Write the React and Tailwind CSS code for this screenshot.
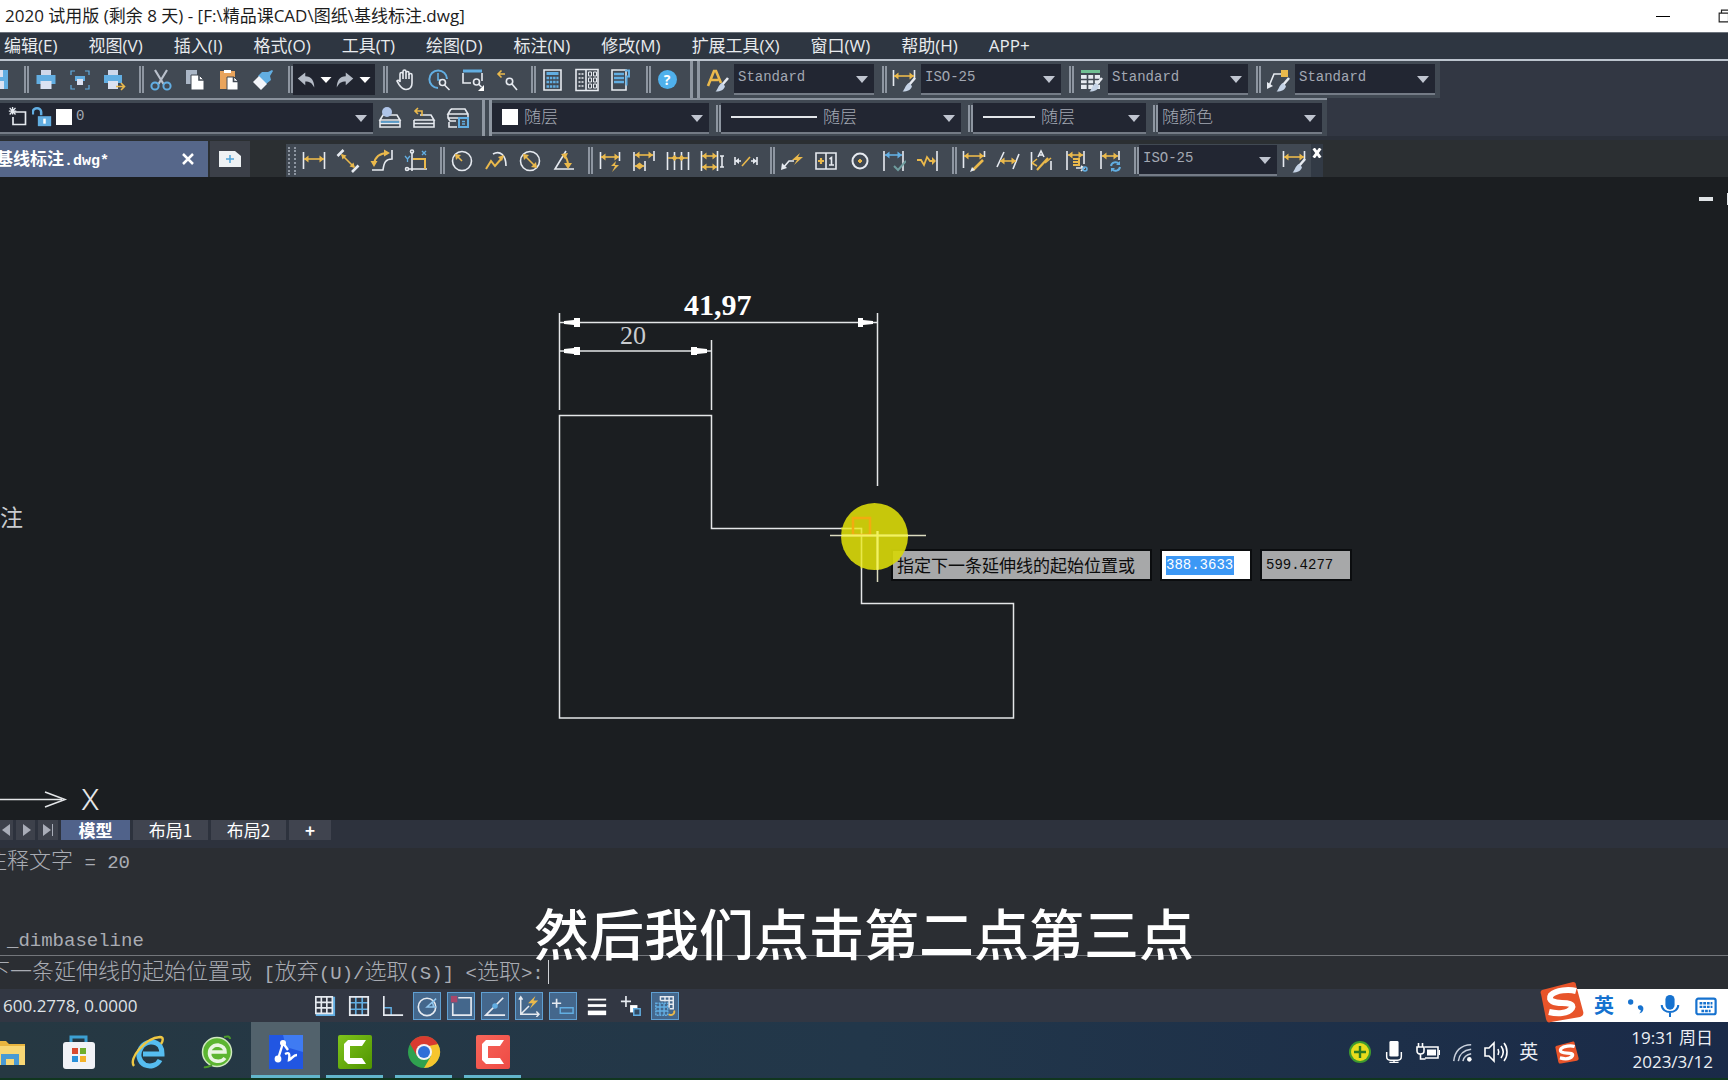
import { useState } from "react";
import clsx from "clsx";

const Y = "#eab94c";
const W = "#e6eaf0";
const B = "#62aee2";
const G = "#b4bbc6";

const menus = ["编辑(E)", "视图(V)", "插入(I)", "格式(O)", "工具(T)", "绘图(D)", "标注(N)", "修改(M)", "扩展工具(X)", "窗口(W)", "帮助(H)", "APP+"];

function Icon({ children, className = "size-6" }) {
  return (
    <svg viewBox="0 0 24 24" className={clsx("shrink-0", className)} fill="none" strokeWidth="1.6">
      {children}
    </svg>
  );
}

/* Horizontal dimension: two ticks and a double arrow */
function DimArrow({ x1 = 2, x2 = 22, y = 10, color = Y }) {
  return (
    <g>
      <path d={`M${x1} ${y}H${x2}`} stroke={color} />
      <path d={`M${x1} ${y}l4.5-3.5v7zM${x2} ${y}l-4.5-3.5v7z`} fill={color} />
    </g>
  );
}

const Brush = () => (
  <g>
    <path d="M23 10l-6 7" stroke={W} strokeWidth="2.6" />
    <path d="M17 15l3 3c-1 4-4 5.500-9.500 5.500 2.500-2 2.500-6.500 6.500-8.500z" fill="#c5d3e6" />
  </g>
);

const fileIcons = [
  {
    name: "打印",
    icon: (
      <Icon>
        <path d="M7 2h10v6H7z" fill="#cfd8ea" />
        <path d="M2.500 7h19v9h-19z" fill={B} />
        <path d="M6.500 13h11v8h-11z" fill="#dbe2f2" />
      </Icon>
    ),
  },
  {
    name: "打印预览",
    icon: (
      <Icon>
        <path d="M3 7V3h4M17 3h4v4M21 17v4h-4M7 21H3v-4" stroke={B} strokeWidth="1.200" />
        <path d="M7 8h10v5H7z" fill={B} />
        <path d="M9 11h6v6H9z" fill="#dbe2f2" />
      </Icon>
    ),
  },
  {
    name: "发布",
    icon: (
      <Icon>
        <path d="M6 2h10v6H6z" fill="#cfd8ea" />
        <path d="M2 7h18v8H2z" fill={B} />
        <path d="M6 13h10v8H6z" fill="#dbe2f2" />
        <path d="M14 18.500h8M19 15l3.500 3.500L19 22" stroke={Y} />
      </Icon>
    ),
  },
];

const editIcons = [
  {
    name: "剪切",
    icon: (
      <Icon>
        <path d="M6 2l8.500 14M18 2L9.500 16" stroke="#b9c0cb" strokeWidth="2.200" />
        <circle cx="6" cy="18" r="3.600" stroke={B} strokeWidth="2" />
        <circle cx="18" cy="18" r="3.600" stroke={B} strokeWidth="2" />
      </Icon>
    ),
  },
  {
    name: "复制",
    icon: (
      <Icon>
        <path d="M3 2h11v14H3z" fill="#aab6c6" />
        <path d="M8 7h8l5 5v10H8z" fill="#fff" stroke="#414953" strokeWidth="1" />
        <path d="M16 7v5h5" stroke="#414953" />
      </Icon>
    ),
  },
  {
    name: "粘贴",
    icon: (
      <Icon>
        <path d="M3 3h15v18H3z" fill="#e9a45c" />
        <path d="M7 2h7v3H7z" fill="#fff" />
        <path d="M10 9h7l4 4v9H10z" fill="#fff" stroke="#414953" strokeWidth="1" />
        <path d="M16.500 9v4.500H21" stroke="#414953" />
      </Icon>
    ),
  },
  {
    name: "特性匹配",
    icon: (
      <Icon>
        <path d="M17 4l4-2 1 1-3 5 1 4-5 4-8-8 4-4z" fill={B} />
        <path d="M8 8l8 8-6 6-8-8z" fill="#f3f5fa" />
      </Icon>
    ),
  },
];

const zoomIcons = [
  {
    name: "平移",
    icon: (
      <Icon>
        <path
          d="M7 14V6a1.500 1.500 0 013 0V3.500a1.500 1.500 0 013 0V5a1.500 1.500 0 013 0v2a1.500 1.500 0 013 0v8c0 4-2 6.500-6 6.500-3.500 0-5-2-7-5l-2-3.500c1-1.500 2.500-.5 3 1z"
          stroke={W}
        />
        <path d="M10 6v5M13 5v6M16 6v5" stroke={W} />
      </Icon>
    ),
  },
  {
    name: "实时缩放",
    icon: (
      <Icon>
        <path d="M11 20A8.800 8.800 0 1120 11" stroke={B} strokeWidth="2" />
        <path d="M11 5v7h3" stroke={B} />
        <circle cx="15.500" cy="14.500" r="3" stroke={W} />
        <path d="M17.500 17l5 5" stroke={W} />
      </Icon>
    ),
  },
  {
    name: "窗口缩放",
    icon: (
      <Icon>
        <path d="M2 3h19" stroke={B} strokeWidth="3" />
        <path d="M2 5v10h8M21 5v8" stroke={W} />
        <circle cx="15.500" cy="14" r="3" stroke={W} />
        <path d="M17.500 16l3 3" stroke={W} />
        <path d="M23 17v6h-6z" fill="#fff" />
      </Icon>
    ),
  },
  {
    name: "缩放上一个",
    icon: (
      <Icon>
        <path d="M3 6h7M6.500 2.500L3 6l3.500 3.500" stroke={Y} />
        <circle cx="14.500" cy="13.500" r="3.200" stroke={W} />
        <path d="M17 16l5 6" stroke={W} />
      </Icon>
    ),
  },
];

const paletteIcons = [
  {
    name: "特性",
    icon: (
      <Icon>
        <path d="M3 2h17v20H3z" stroke={W} />
        <path d="M5.500 5.500h12" stroke={B} strokeWidth="3" />
        <path d="M5.500 10h12M5.500 14h12M5.500 18.500h12" stroke={B} strokeWidth="2.400" strokeDasharray="2.500 .8" />
      </Icon>
    ),
  },
  {
    name: "设计中心",
    icon: (
      <Icon>
        <path d="M1 1.500h22v21H1zM11 1.500v21" stroke={W} />
        <path d="M3.500 6h5M3.500 10h5M3.500 14h5M3.500 18h5" stroke={W} strokeDasharray="2 1" />
        <path d="M13.500 4h3v4h-3zM18.500 4h3v4h-3zM13.500 10h3v4h-3zM18.500 10h3v4h-3zM13.500 16h3v4h-3zM18.500 16h3v4h-3z" stroke={W} strokeWidth="1" />
      </Icon>
    ),
  },
  {
    name: "工具选项板",
    icon: (
      <Icon>
        <path d="M3 2h14v20H3z" stroke={W} />
        <path d="M5 6h10M5 10h10M5 14h10" stroke={B} strokeWidth="2.600" />
        <path d="M16 2.500h4v6h-2.500v9" stroke={B} strokeWidth="2" />
      </Icon>
    ),
  },
];

const styleTools = [
  {
    name: "文字样式",
    value: "Standard",
    icon: (
      <Icon>
        <path d="M3 18L9 3h2l5 12M5.500 12h8" stroke={Y} strokeWidth="2.600" />
        <Brush />
      </Icon>
    ),
  },
  {
    name: "标注样式",
    value: "ISO-25",
    icon: (
      <Icon>
        <path d="M1.500 2v16M22.500 2v9" stroke={W} />
        <DimArrow y={8} />
        <Brush />
      </Icon>
    ),
  },
  {
    name: "表格样式",
    value: "Standard",
    icon: (
      <Icon>
        <path d="M2 3.500h19" stroke="#6fbf92" strokeWidth="3" />
        <path d="M2 7h19v14H2z" fill={W} />
        <path d="M2 11.500h19M2 16h19M8.500 7v14M15 7v14" stroke="#414953" />
        <Brush />
      </Icon>
    ),
  },
  {
    name: "引线样式",
    value: "Standard",
    icon: (
      <Icon>
        <path d="M3 18L8 6h8" stroke={W} />
        <path d="M1 14v7l6-3z" fill={W} />
        <path d="M15 2h7v7h-7z" fill={Y} />
        <Brush />
      </Icon>
    ),
  },
];

const layerIcons = [
  {
    name: "设为当前图层",
    icon: (
      <Icon>
        <path d="M5 9h14l3 5H2zM2 14v7h20v-7M2 17.500h20" stroke={W} />
        <path d="M3 16h18" stroke={B} />
        <circle cx="9" cy="6" r="5" fill="#aec4e8" />
      </Icon>
    ),
  },
  {
    name: "上一个图层",
    icon: (
      <Icon>
        <path d="M8 9h11l3 5H2M2 14v7h20v-7M2 17.500h20" stroke={W} />
        <path d="M10 10V5H3M6 2L3 5l3 3" stroke={Y} />
      </Icon>
    ),
  },
  {
    name: "图层状态",
    icon: (
      <Icon>
        <path d="M5 3h14l3 5v3M5 3L2 8h20M2 12h10M2 8v4l2 3h6M3 16v5h8" stroke={W} />
        <path d="M13 12h9v9h-9z" stroke={B} strokeWidth="2" />
        <path d="M16 15.500h3M16 18h3" stroke={B} />
      </Icon>
    ),
  },
];

const dimGroups = [
  [
    {
      name: "线性标注",
      icon: (
        <Icon>
          <path d="M1.500 3v17M22.500 3v17" stroke={W} />
          <DimArrow />
        </Icon>
      ),
    },
    {
      name: "对齐标注",
      icon: (
        <Icon>
          <path d="M1.500 7L7.500 1M16 23l6.500-6.500" stroke={W} strokeWidth="2.600" />
          <path d="M6 6l12 12" stroke={Y} />
          <path d="M5 5l5.500 1.500-4 4zM19 19l-5.500-1.500 4-4z" fill={Y} />
        </Icon>
      ),
    },
    {
      name: "弧长标注",
      icon: (
        <Icon>
          <path d="M22 1v9c-6 0-8 3-9 11H2" stroke={W} />
          <path d="M4 15C5 8 10 4 18 4" stroke={Y} strokeWidth="2" />
          <path d="M20 4l-6-3.500v7zM4 18l-3.500-6h7z" fill={Y} />
        </Icon>
      ),
    },
    {
      name: "坐标标注",
      icon: (
        <Icon>
          <path d="M8 4v18M5 20h18" stroke={W} />
          <circle cx="8" cy="2.500" r="1.500" stroke={W} />
          <circle cx="3" cy="20" r="1.500" stroke={W} />
          <path d="M9 10h12v10" stroke={Y} strokeWidth="2" />
          <path d="M18 2l4 4M22 2l-4 4M1 7l2.500 3L6 7M3.500 10v3" stroke={B} strokeWidth="1.300" />
        </Icon>
      ),
    },
  ],
  [
    {
      name: "半径标注",
      icon: (
        <Icon>
          <circle cx="12" cy="12" r="9.500" stroke={W} />
          <path d="M6 6l6 6" stroke={Y} />
          <path d="M5 5l6 1-5 5z" fill={Y} />
        </Icon>
      ),
    },
    {
      name: "折弯标注",
      icon: (
        <Icon>
          <path d="M9 5c7-4 13 1 13 12" stroke={W} />
          <path d="M2 20l5-8 4 5 7-8" stroke={Y} strokeWidth="2" />
          <path d="M20 6l-6 2 4 4z" fill={Y} />
        </Icon>
      ),
    },
    {
      name: "直径标注",
      icon: (
        <Icon>
          <circle cx="12" cy="12" r="9.500" stroke={W} />
          <path d="M6 6l12 12" stroke={Y} />
          <path d="M5 5l6 1-5 5zM19 19l-6-1 5-5z" fill={Y} />
        </Icon>
      ),
    },
    {
      name: "角度标注",
      icon: (
        <Icon>
          <path d="M14 2L3 20h19" stroke={W} />
          <path d="M11 6c4 2 5 6 5 11" stroke={Y} strokeWidth="2" />
          <path d="M9 5l7-1-3 6zM16 20l-4-6h8z" fill={Y} />
        </Icon>
      ),
    },
  ],
  [
    {
      name: "快速标注",
      icon: (
        <Icon>
          <path d="M2.500 3v17M21.500 3v9" stroke={W} />
          <DimArrow x1={3} x2={21} y={8} />
          <path d="M18 12l-5 5h4l-3 6 7-7h-4z" fill={Y} />
        </Icon>
      ),
    },
    {
      name: "基线标注",
      icon: (
        <Icon>
          <path d="M2 3v19M22 2v10M13 12v10" stroke={W} />
          <DimArrow x1={3} x2={21} y={6} />
          <DimArrow x1={3} x2={12} y={17} />
        </Icon>
      ),
    },
    {
      name: "连续标注",
      icon: (
        <Icon>
          <path d="M1.500 3v18M8.500 3v18M15.500 3v18M22.500 3v18" stroke={W} />
          <path d="M2 9h20" stroke={Y} />
          <path d="M8.500 6v6l-3-3zM8.500 6v6l3-3zM15.500 6v6l-3-3zM15.500 6v6l3-3z" fill={Y} />
        </Icon>
      ),
    },
    {
      name: "标注间距",
      icon: (
        <Icon>
          <path d="M1.500 2v20M17.500 2v20M20 7h4M20 18h4M22 7v11" stroke={W} />
          <DimArrow x1={2} x2={17} y={7} />
          <DimArrow x1={2} x2={17} y={18} />
        </Icon>
      ),
    },
    {
      name: "打断标注",
      icon: (
        <Icon>
          <path d="M1 8v8M23 8v8M1 12h6M17 12h6" stroke={W} />
          <path d="M1 12l4-3v6zM23 12l-4-3v6z" fill={W} />
          <path d="M8 17l8-9" stroke={Y} />
        </Icon>
      ),
    },
  ],
  [
    {
      name: "快速引线",
      icon: (
        <Icon>
          <path d="M3 19l6-7h5" stroke={W} />
          <path d="M1 21l1-7 5 5z" fill={W} />
          <path d="M20 4l-8 7h5l-3 5 9-8h-5z" fill={Y} />
        </Icon>
      ),
    },
    {
      name: "公差",
      icon: (
        <Icon>
          <path d="M2 4h20v16H2zM12 4v16" stroke={W} />
          <path d="M4 12h6M7 9v6" stroke={Y} strokeWidth="2.200" />
          <path d="M15.500 10l2-1.500V16M15 16h5" stroke={W} />
        </Icon>
      ),
    },
    {
      name: "圆心标记",
      icon: (
        <Icon>
          <circle cx="12" cy="12" r="7.500" stroke={W} strokeWidth="2" />
          <path d="M10 12h4M12 10v4" stroke={Y} strokeWidth="2" />
        </Icon>
      ),
    },
    {
      name: "检验",
      icon: (
        <Icon>
          <path d="M2 2v20M21 2v20" stroke={W} />
          <DimArrow x1={3} x2={20} y={6} color={B} />
          <path d="M12 17l4 4 8-9" stroke="#6f9c9e" strokeWidth="2" />
        </Icon>
      ),
    },
    {
      name: "折弯线性",
      icon: (
        <Icon>
          <path d="M21 2v20" stroke={W} />
          <path d="M1 11h4l3 5 3-8 3 4h5" stroke={Y} strokeWidth="1.800" />
          <path d="M20 12l-4-4v8z" fill={Y} />
        </Icon>
      ),
    },
  ],
  [
    {
      name: "编辑标注",
      icon: (
        <Icon>
          <path d="M1.500 2v17M22.500 2v6" stroke={W} />
          <DimArrow y={7} />
          <path d="M21 11L11 21" stroke={Y} strokeWidth="2.600" />
          <path d="M8 23l2-5 3 3z" fill={W} />
        </Icon>
      ),
    },
    {
      name: "倾斜标注",
      icon: (
        <Icon>
          <path d="M8 3L1 18M23 5l-6 15" stroke={W} />
          <DimArrow x1={4} x2={20} y={12} />
        </Icon>
      ),
    },
    {
      name: "文字角度",
      icon: (
        <Icon>
          <path d="M1.500 3v18M8 8l3-6 3 6M9 6h4M21 12v9" stroke={W} />
          <path d="M2 14l5-4M2 14l5 3M15 14l6-5" stroke={Y} />
          <path d="M18 9L7 21" stroke={Y} strokeWidth="2.200" />
        </Icon>
      ),
    },
    {
      name: "标注替代",
      icon: (
        <Icon>
          <path d="M3 2v19M20 2v13" stroke={W} />
          <DimArrow x1={4} x2={19} y={6} />
          <path d="M9 10h6v6H9M9 13h6" stroke={Y} strokeWidth="2" />
          <path d="M12 19h8M17 17l3 2-3 3" stroke={W} />
          <circle cx="21" cy="20" r="2" stroke={B} />
        </Icon>
      ),
    },
    {
      name: "标注更新",
      icon: (
        <Icon>
          <path d="M3 2v18M21 2v9" stroke={W} />
          <DimArrow x1={4} x2={20} y={7} />
          <path d="M13 17a4.500 4.500 0 018-2M22 18a4.500 4.500 0 01-8 2" stroke={B} strokeWidth="2" />
          <path d="M22 12v4h-4zM13 23v-4h4z" fill={B} />
        </Icon>
      ),
    },
  ],
];

const statusToggles = [
  {
    name: "捕捉",
    icon: (
      <Icon className="size-[22px]">
        <path d="M21.500 2v19.500H2" stroke={B} strokeWidth="3" />
        <path d="M2 2h18v18H2zM8 2v18M14 2v18M2 8h18M2 14h18" stroke={W} strokeWidth="1.800" />
      </Icon>
    ),
  },
  {
    name: "栅格",
    icon: (
      <Icon className="size-[22px]">
        <path d="M8.500 2v20M15.500 2v20M2 8.500h20M2 15.500h20" stroke={B} strokeWidth="1.800" />
        <path d="M2 2h20v20H2z" stroke={W} strokeWidth="2" />
      </Icon>
    ),
  },
  {
    name: "正交",
    icon: (
      <Icon className="size-[22px]">
        <path d="M2 14h8v8" stroke={B} />
        <path d="M2 1v21h21" stroke={W} strokeWidth="1.800" />
      </Icon>
    ),
  },
  {
    name: "极轴",
    on: true,
    icon: (
      <Icon className="size-[22px]">
        <circle cx="12" cy="13" r="9.500" stroke={W} strokeWidth="1.800" />
        <path d="M22 4L12 13h10M17 8c2 1 2 3 2 5" stroke="#8fc6ee" />
      </Icon>
    ),
  },
  {
    name: "对象捕捉",
    on: true,
    icon: (
      <Icon className="size-[22px]">
        <path d="M9 3h14v19H3V9" stroke={W} strokeWidth="1.800" />
        <path d="M1 1h7v7H1z" fill="#a8476a" />
      </Icon>
    ),
  },
  {
    name: "对象追踪",
    on: true,
    icon: (
      <Icon className="size-[22px]">
        <path d="M21 3L2 22h21" stroke={W} strokeWidth="1.800" />
        <circle cx="12" cy="12" r="3" fill={B} />
      </Icon>
    ),
  },
  {
    name: "动态UCS",
    on: true,
    icon: (
      <Icon className="size-[22px]">
        <path d="M3 2v19h20M3 21l9-9M1 5l2-3 2 3M20 18l3 3-3 3" stroke={W} />
        <path d="M19 1l-8 8h5l-3 6 9-9h-5z" fill={Y} />
      </Icon>
    ),
  },
  {
    name: "动态输入",
    on: true,
    icon: (
      <Icon className="size-[22px]">
        <path d="M0 9h10M5 4v10" stroke={W} strokeWidth="1.800" />
        <path d="M9 14h14v6H9z" stroke={B} />
      </Icon>
    ),
  },
  {
    name: "线宽",
    icon: (
      <Icon className="size-[22px]">
        <path d="M2 5h20" stroke="#fff" strokeWidth="2" />
        <path d="M2 11.500h20" stroke="#fff" strokeWidth="3" />
        <path d="M2 19.500h20" stroke="#fff" strokeWidth="5" />
      </Icon>
    ),
  },
  {
    name: "选择循环",
    icon: (
      <Icon className="size-[22px]">
        <path d="M1 7h11M6.500 1v12" stroke={W} strokeWidth="1.800" />
        <path d="M11 11h8v8h-8z" fill="#fff" />
        <path d="M15 15h7v7h-7z" fill="#324a62" stroke={B} />
      </Icon>
    ),
  },
  {
    name: "模型空间",
    on: true,
    icon: (
      <Icon className="size-[22px]">
        <path d="M2 9h13v13H2z" stroke={B} strokeDasharray="2 1" />
        <path d="M6.500 9v13M11 9v13M2 13h13M2 17.500h13" stroke={B} />
        <path d="M7 6V2h14v13h-4M12 2v5M16.500 2v12M7 6h14M17 10h4" stroke={W} />
        <path d="M22 17c1 4-3 6-6 4" stroke={Y} strokeWidth="2" />
      </Icon>
    ),
  },
];

function Camtasia({ from, to, id }) {
  return (
    <svg viewBox="0 0 34 34" className="size-[34px]">
      <defs>
        <linearGradient id={id} x1="0" y1="0" x2="1" y2="1">
          <stop offset="0" stopColor={from} />
          <stop offset="1" stopColor={to} />
        </linearGradient>
      </defs>
      <rect width="34" height="34" rx="2" fill={`url(#${id})`} />
      <path d="M28 5H10L6 9v16l4 4h18l-4-6H12V11h12z" fill="#fff" />
    </svg>
  );
}

const apps = [
  {
    name: "文件资源管理器",
    icon: (
      <svg viewBox="0 0 34 34" className="size-[34px]">
        <path d="M0 6h13l3 3h16v21H0z" fill="#e9b53f" />
        <path d="M0 11h32v19H0z" fill="#f8d775" />
        <path d="M8 30V19h18v11h-5v-6h-8v6z" fill="#4a9ad4" />
      </svg>
    ),
  },
  {
    name: "Microsoft Store",
    icon: (
      <svg viewBox="0 0 34 34" className="size-[34px]">
        <path d="M9 9V2h15v7" fill="none" stroke="#3c9fd2" strokeWidth="3" />
        <rect x="1" y="7" width="32" height="27" rx="3" fill="#f1f2f6" />
        <path d="M10 13h6v6h-6z" fill="#d9492f" />
        <path d="M18 13h6v6h-6z" fill="#6fae2c" />
        <path d="M10 21h6v6h-6z" fill="#2b90d9" />
        <path d="M18 21h6v6h-6z" fill="#f3b22a" />
      </svg>
    ),
  },
  {
    name: "Internet Explorer",
    icon: (
      <svg viewBox="0 0 34 34" className="size-[34px]" fill="none">
        <path d="M29 25c-3 6-10 7-15 5-6-3-8-11-4-17 4-7 14-8 19-2 2 3 2 5 2 8H12" stroke="#56bdf0" strokeWidth="5" />
        <path d="M3 31C-3 24 14 3 29 2c4 0 3 4 1 7" stroke="#efc743" strokeWidth="2.400" />
      </svg>
    ),
  },
  {
    name: "360浏览器",
    icon: (
      <svg viewBox="0 0 34 34" className="size-[34px]" fill="none">
        <circle cx="17" cy="17" r="14.500" fill="#5cb531" stroke="#cfe8c0" strokeWidth="1.500" />
        <path d="M25 23c-4 5-13 4-15-2-2-7 3-11 8-11 5 1 7 4 7 7H11" stroke="#e9f5e2" strokeWidth="3.600" />
        <path d="M4 32c2 1 6-1 8-2M24 2c3-1 6-1 6 2" stroke="#4a9a2a" strokeWidth="2" />
      </svg>
    ),
  },
  {
    name: "中望CAD",
    state: "active",
    icon: (
      <svg viewBox="0 0 34 34" className="size-[34px]" fill="none">
        <path d="M0 0h34v34H0z" fill="#2156e2" />
        <path d="M14 0h20v17L17 12z" fill="#3f7bf2" />
        <path d="M14 8L9 24M14 8l5 7" stroke="#fff" strokeWidth="2.400" />
        <circle cx="14" cy="8" r="3" fill="#fff" />
        <circle cx="9" cy="24" r="3.400" fill="#fff" />
        <path d="M16 19c4-2 5-1 4 6 3-1 4-5 8-5" stroke="#fff" strokeWidth="2.400" />
      </svg>
    ),
  },
  { name: "Camtasia", state: "open", icon: <Camtasia id="cam-green" from="#7fc41c" to="#4f9400" /> },
  {
    name: "Chrome",
    state: "open",
    icon: (
      <svg viewBox="0 0 34 34" className="size-[34px]">
        <circle cx="17" cy="17" r="16" fill="#2fa14f" />
        <path d="M3.100 9A16 16 0 0130.900 9L17 10l-7 11z" fill="#d93b30" />
        <path d="M30.900 9A16 16 0 0117 33l7-12-3-11z" fill="#f6c52e" />
        <path d="M17 9h14L17 12z" fill="#d93b30" />
        <circle cx="17" cy="17" r="8" fill="#f2f4f6" />
        <circle cx="17" cy="17" r="6" fill="#2f6fd8" />
      </svg>
    ),
  },
  { name: "Camtasia 录像机", state: "open", icon: <Camtasia id="cam-red" from="#f7665a" to="#ee4a44" /> },
];

function Sogou({ className }) {
  return (
    <svg viewBox="0 0 44 42" className={clsx("shrink-0", className)} fill="none">
      <path d="M2 9L33 1c2 0 3 1 3 3l7 26c1 3 0 5-3 6L11 41c-3 1-4 0-5-3L1 13c-1-2 0-3 1-4z" fill="#e8542a" />
      <path d="M36 10c-7-2-20-1-25 4-4 6 4 8 11 8 6 0 12 1 10 5-4 6-15 6-23 4" stroke="#fff" strokeWidth="6" />
    </svg>
  );
}

function ToolButton({ name, children }) {
  return (
    <button type="button" aria-label={name} className="flex h-8 w-[34px] shrink-0 items-center justify-center">
      {children}
    </button>
  );
}

function Tools({ items }) {
  return items.map((item) => (
    <ToolButton key={item.name} name={item.name}>
      {item.icon}
    </ToolButton>
  ));
}

function Sep({ wide, tight }) {
  return (
    <span
      className={clsx("flex shrink-0 justify-end", wide && "w-[17px] gap-1 self-stretch", tight && "h-[27px] w-3 gap-px", !wide && !tight && "h-[27px] w-[13px] gap-px")}
    >
      <span className={clsx("bg-[#8e96a1]", wide ? "w-[3px]" : "w-0.5")} />
      <span className={clsx("bg-[#8e96a1]", wide ? "w-[3px]" : "w-0.5")} />
    </span>
  );
}

function Combo({ name, value, className, cjk, children }) {
  return (
    <div className={clsx("relative flex h-[31px] shrink-0 items-center border-b-2 border-[#747b86] bg-[#222632] pl-1", className)}>
      {children}
      <select
        aria-label={name}
        defaultValue={value}
        className={clsx(
          "h-full min-w-0 flex-1 appearance-none bg-transparent pb-0.5 pr-6 text-[#a3a8b3] outline-none",
          cjk ? "font-['Noto_Sans_CJK_SC',sans-serif] text-[17px] font-light" : "font-['Liberation_Mono',monospace] text-[14px]"
        )}
      >
        <option>{value}</option>
      </select>
      <svg viewBox="0 0 12 7" className="pointer-events-none absolute right-1.5 top-3 h-[7px] w-3">
        <path d="M0 0h12L6 7z" fill="#c0c5d0" />
      </svg>
    </div>
  );
}

function MenuBar() {
  return (
    <nav className="flex h-[29px] shrink-0 gap-[31px] border-b-2 border-[#bcc4ce] border-t border-t-[#6c737c] bg-[#2e3641] pl-1 text-[17px] leading-[26px] text-[#e8ebee]">
      {menus.map((m) => (
        <button key={m} type="button" className="shrink-0 whitespace-nowrap">
          {m}
        </button>
      ))}
    </nav>
  );
}

function Toolbars() {
  return (
    <div className="flex shrink-0 flex-col items-start bg-[#323743]">
      <div className="flex h-[37px] items-center bg-[#414953] pr-[5px]">
        <button type="button" aria-label="保存" className="-ml-[18px] flex h-8 w-[34px] items-center justify-center">
          <Icon>
            <path d="M2 2h19v19H2z" fill={B} />
            <path d="M6 2h10v7H6zM5 13h12v8H5z" fill="#dbe2f2" />
          </Icon>
        </button>
        <Sep />
        <Tools items={fileIcons} />
        <Sep />
        <Tools items={editIcons} />
        <Sep />
        <div className="flex h-[31px] w-[82px] items-center justify-between bg-[#20242f] px-1">
          <button type="button" aria-label="放弃">
            <Icon className="size-[18px]">
              <path d="M1 10l10-8v5c8 0 12 6 12 15-3-6-6-8-12-8v5z" fill={G} />
            </Icon>
          </button>
          <button type="button" aria-label="放弃列表">
            <Icon className="size-3">
              <path d="M1 6h22L12 18z" fill="#fff" />
            </Icon>
          </button>
          <button type="button" aria-label="重做">
            <Icon className="size-[18px]">
              <path d="M23 10L13 2v5C5 7 1 13 1 22c3-6 6-8 12-8v5z" fill={G} />
            </Icon>
          </button>
          <button type="button" aria-label="重做列表">
            <Icon className="size-3">
              <path d="M1 6h22L12 18z" fill="#fff" />
            </Icon>
          </button>
        </div>
        <Sep />
        <Tools items={zoomIcons} />
        <Sep tight />
        <Tools items={paletteIcons} />
        <Sep />
        <button type="button" aria-label="帮助" className="flex w-8 justify-center">
          <span className="flex size-[19px] items-center justify-center rounded-full bg-[#4fb0ec] text-[14px] font-bold leading-none text-white">?</span>
        </button>
        <Sep wide />
        {styleTools.map((s, i) => (
          <div key={s.name} className="flex items-center">
            {i > 0 && <Sep />}
            <ToolButton name={s.name}>{s.icon}</ToolButton>
            <Combo name={s.name} value={s.value} className="w-[140px]" />
          </div>
        ))}
      </div>

      <div className="flex h-[38px] items-center border-t-2 border-[#8a929d] bg-[#414953] pr-[5px]">
        <Combo name="图层" value="0" className="w-[373px]">
          <Icon className="ml-1 mr-1 size-5">
            <path d="M6 6h15v15H6v-9" stroke={W} strokeWidth="2" />
            <path d="M1 5h9M5.500 0v9M2 1l7 8M9 1L2 9" stroke={W} />
          </Icon>
          <Icon className="mr-1 size-5">
            <path d="M1 9V6c0-6 10-6 10 0v4" stroke={B} strokeWidth="3" />
            <path d="M7 11h16v12H7z" fill={B} />
            <path d="M15 14v6" stroke="#fff" strokeWidth="3" />
          </Icon>
          <span className="mr-1 size-4 shrink-0 bg-white" />
        </Combo>
        <Tools items={layerIcons} />
        <Sep wide />
        <Combo name="颜色" value="随层" cjk className="w-[217px]">
          <span className="ml-1.5 mr-1.5 size-4 shrink-0 bg-white" />
        </Combo>
        <Sep tight />
        <Combo name="线型" value="随层" cjk className="w-[240px]">
          <span className="ml-1.5 mr-1.5 h-0.5 w-[86px] shrink-0 bg-[#e3e6ea]" />
        </Combo>
        <Sep tight />
        <Combo name="线宽" value="随层" cjk className="w-[173px]">
          <span className="ml-1.5 mr-1.5 h-0.5 w-[52px] shrink-0 bg-[#e3e6ea]" />
        </Combo>
        <Sep tight />
        <Combo name="打印样式" value="随颜色" cjk className="w-[164px]" />
      </div>
    </div>
  );
}

function DocumentRow() {
  return (
    <div className="flex h-[41px] shrink-0 items-end border-t-4 border-[#2b303a] bg-[#2b2f32]">
      <div className="flex h-9 w-[208px] items-center justify-between overflow-hidden bg-[#56678a] pr-3.5 font-bold text-white">
        <span className="-ml-1 whitespace-nowrap">
          <span className="font-['Noto_Sans_CJK_SC',sans-serif] text-[17px]">基线标注</span>
          <span className="font-['Liberation_Mono',monospace] text-[15px]">.dwg*</span>
        </span>
        <button type="button" aria-label="关闭图纸">
          <Icon className="size-3">
            <path d="M2 2l20 20M22 2L2 22" stroke="#fff" strokeWidth="5" />
          </Icon>
        </button>
      </div>
      <button type="button" aria-label="新建图纸" className="ml-0.5 flex h-9 w-10 items-center justify-center bg-[#3c4049]">
        <svg viewBox="0 0 22 16" className="h-4 w-[22px]">
          <path d="M0 0h16l6 5v11H0z" fill="#eef1f4" />
          <path d="M7 8h8M11 4v8" stroke="#4fa3d8" strokeWidth="1.500" />
        </svg>
      </button>
      <div className="ml-9 flex h-[33px] items-center bg-[#414953]">
        <span className="ml-0.5 mr-px h-7 w-2 border-x-2 border-dotted border-[#8e96a1]" />
        {dimGroups.map((group) => (
          <div key={group[0].name} className="flex items-center">
            <Tools items={group} />
            <Sep tight />
          </div>
        ))}
        <Combo name="当前标注样式" value="ISO-25" className="w-[138px]" />
        <ToolButton name="标注样式管理">{styleTools[1].icon}</ToolButton>
        <button type="button" aria-label="关闭工具栏" className="flex h-full w-3 items-start justify-center bg-[#323a45] pt-1">
          <Icon className="size-2.5">
            <path d="M4 1l16 22M20 1L4 23" stroke="#fff" strokeWidth="7" />
          </Icon>
        </button>
      </div>
    </div>
  );
}

function Drawing() {
  return (
    <main className="relative min-h-[560px] flex-1 overflow-hidden bg-[#1b1e21]">
      <svg className="absolute inset-0 h-full w-full" fill="none" stroke="#e4e6e8" strokeWidth="1.500">
        <path d="M559.500 238.500h152v113h150v75h152v114.500h-454z" />
        {/* extension and dimension lines */}
        <path d="M559.500 136v97M711.500 163v70M877.500 136v173" />
        <path d="M560 145.500h317M560 174h151" />
        <g fill="#fff" stroke="none">
          <path d="M564 144l10-1 0-2h6v9h-6v-2l-10-1zM873 144l-10-1v-2h-5v9h5v-2l10-1z" />
          <path d="M564 172l10-1 0-1h6v8h-6v-1l-10-1zM707 172l-10-1v-1h-6v8h6v-1l10-1z" />
        </g>
        <g stroke="none" className="font-['Liberation_Serif',serif]">
          <text x="684" y="138" fontSize="30" fontWeight="700" fill="#fff">
            41,97
          </text>
          <text x="620" y="167" fontSize="26" fill="#c9ccd0">
            20
          </text>
        </g>
        <text x="0" y="349" fontSize="23" stroke="none" fill="#c9ccd0" className="font-['Noto_Sans_CJK_SC',sans-serif]">
          注
        </text>
        {/* UCS axis */}
        <path d="M0 622.500h62" />
        <path d="M45 615l20 7.500L45 630" />
        <text x="81" y="633" fontSize="28" stroke="none" fill="#e4e6e8" className="font-['Inter',sans-serif] font-light">
          X
        </text>
      </svg>

      <form className="absolute left-[891px] top-[372px] flex gap-2 text-[#0c0c0c]">
        <label htmlFor="pos-x" className="h-8 w-[261px] whitespace-nowrap border-2 border-[#0b0d0f] bg-[#a7a8a9] pl-1 font-['Noto_Sans_CJK_SC',sans-serif] text-[17px] leading-7">
          指定下一条延伸线的起始位置或
        </label>
        <span className="flex h-8 w-[92px] items-center border-2 border-[#0b0d0f] bg-white pl-1">
          <input
            id="pos-x"
            defaultValue="388.3633"
            className="h-[19px] w-[68px] bg-[#3c98f5] font-['Liberation_Mono',monospace] text-[14px] text-white outline-none"
          />
        </span>
        <span className="flex h-8 w-[92px] items-center border-2 border-[#0b0d0f] bg-[#a7a8a9] pl-1">
          <input
            aria-label="Y"
            defaultValue="599.4277"
            className="h-[19px] w-[72px] bg-transparent font-['Liberation_Mono',monospace] text-[14px] outline-none"
          />
        </span>
      </form>

      <svg className="pointer-events-none absolute inset-0 h-full w-full" fill="none" strokeWidth="1.500">
        <circle cx="874.500" cy="359.500" r="33.500" fill="#d6d60a" fillOpacity=".92" />
        <path d="M841 351.500h20.500v40" stroke="#e8e84a" />
        <path d="M853 341h17v17h-17z" stroke="#f2ac10" strokeWidth="2.500" />
        <path d="M830 358.500h96M877.500 354v51" stroke="#dcdcc0" />
        <path d="M842 358.500h66M877.500 354v39" stroke="#f4f45a" strokeWidth="2" />
      </svg>

      <div className="absolute right-0 top-4 flex items-center gap-3.5">
        <button type="button" aria-label="最小化图纸" className="h-1 w-3.5 bg-[#dfe3e6]" />
        <span className="h-3 w-px bg-[#dfe3e6]" />
      </div>
    </main>
  );
}

function LayoutTabs() {
  const [active, setActive] = useState("模型");
  const nav = [
    { name: "上一个布局", d: "M9 0v12L1 6z", width: "w-[13px]" },
    { name: "下一个布局", d: "M3 0v12l8-6z", width: "w-[19px]" },
    { name: "最后布局", d: "M1 0v12l8-6zM10 0h1v12h-1z", width: "w-[20px]" },
  ];
  const tabs = [
    { name: "模型", width: "w-[69px]" },
    { name: "布局1", width: "w-[75px]" },
    { name: "布局2", width: "w-[75px]" },
    { name: "+", width: "w-[42px]" },
  ];

  return (
    <div className="flex h-7 shrink-0 items-start gap-[3px] bg-[#2d323d] font-['Noto_Sans_CJK_SC',sans-serif] text-[17px]">
      {nav.map((n) => (
        <button key={n.name} type="button" aria-label={n.name} className={clsx("flex h-5 items-center justify-center bg-[#3d414b]", n.width)}>
          <svg viewBox="0 0 12 12" className="size-3">
            <path d={n.d} fill="#a9adb8" />
          </svg>
        </button>
      ))}
      {tabs.map((t) => (
        <button
          key={t.name}
          type="button"
          onClick={() => setActive(t.name)}
          className={clsx("h-5 leading-[18px] text-white", t.width, active === t.name ? "bg-[#50628a] font-bold" : "bg-[#40444f]", t.name === "+" && "font-bold")}
        >
          {t.name}
        </button>
      ))}
    </div>
  );
}

/* Half-width runs use the monospaced face, the rest the CJK one */
function Console({ parts }) {
  return parts.map((p, i) => (
    <span key={i} className={i % 2 ? "whitespace-pre font-['Liberation_Mono',monospace] text-[19px]" : "font-['Noto_Sans_CJK_SC',sans-serif] text-[22px] font-light"}>
      {p}
    </span>
  ));
}

function CommandLine() {
  return (
    <section className="relative shrink-0 overflow-hidden whitespace-nowrap bg-[#2b2e33] text-[#a9acb3]">
      <div className="flex h-[107px] flex-col justify-between">
        <p className="-ml-[15px] leading-5">
          <Console parts={["注释文字", " = 20"]} />
        </p>
        <p className="pl-[7px] font-['Liberation_Mono',monospace] text-[19px] leading-7">_dimbaseline</p>
      </div>
      <div className="flex h-[34px] items-start border-t border-[#73767b]">
        <label htmlFor="command" className="-ml-3 leading-[26px]">
          <Console parts={["下一条延伸线的起始位置或", " [", "放弃", "(U)/", "选取", "(S)] <", "选取", ">:"]} />
        </label>
        <input id="command" className="ml-1 mt-1 h-6 flex-1 border-l border-[#d0d2d6] bg-transparent outline-none" />
      </div>
    </section>
  );
}

function StatusBar() {
  return (
    <div className="flex h-[33px] shrink-0 items-center justify-between bg-[#323743]">
      <div className="flex items-center">
        <span className="w-[311px] pl-[3px] text-[17px] text-[#dfe2e6]">600.2778, 0.0000</span>
        <div className="flex gap-1.5">
          {statusToggles.map((t) => (
            <button
              key={t.name}
              type="button"
              aria-label={t.name}
              aria-pressed={Boolean(t.on)}
              className={clsx("flex size-7 items-center justify-center", t.on && "border border-[#5f9fd2] bg-[#44678c]")}
            >
              {t.icon}
            </button>
          ))}
        </div>
      </div>
      <div className="flex h-[34px] w-[188px] items-center">
        <Sogou className="z-10 -mt-2 h-[42px] w-11" />
        <div className="-ml-9 flex h-full flex-1 items-center justify-between bg-white pl-[46px] pr-[11px] text-[#1672cf]">
          <button type="button" className="text-[20px] font-bold leading-none">
            英
          </button>
          <button type="button" aria-label="标点">
            <Icon className="size-4">
              <circle cx="4" cy="6" r="4" fill="currentColor" />
              <path d="M15 12c4-3 9 0 8 5s-4 6-6 6c2-2 2-3 2-5-3 0-5-3-4-6z" fill="currentColor" />
            </Icon>
          </button>
          <button type="button" aria-label="语音">
            <Icon className="size-[22px]">
              <rect x="7" y="0" width="10" height="16" rx="5" fill="currentColor" />
              <path d="M3 11c0 10 18 10 18 0M12 19v5" stroke="currentColor" strokeWidth="2.200" />
            </Icon>
          </button>
          <button type="button" aria-label="键盘">
            <Icon className="size-[22px]">
              <rect x="1.500" y="4" width="21" height="17" rx="2" stroke="currentColor" strokeWidth="2.400" />
              <path d="M5 9h14M5 13h14M7 17.500h10" stroke="currentColor" strokeWidth="2.600" strokeDasharray="3 1" />
            </Icon>
          </button>
        </div>
      </div>
    </div>
  );
}

function Taskbar() {
  return (
    <footer className="flex h-[58px] shrink-0 items-center justify-between overflow-hidden border-b-2 border-[#10361f] bg-gradient-to-r from-[#263842] via-[#22374a] to-[#1a2a48]">
      <div className="-ml-[25px] flex h-full">
        {apps.map((a) => (
          <button key={a.name} type="button" aria-label={a.name} className={clsx("relative flex w-[69px] items-center justify-center pt-1", a.state === "active" && "bg-[#52626c]")}>
            {a.icon}
            {a.state && <span className={clsx("absolute bottom-0 h-[3px] bg-[#62b6cc]", a.state === "active" ? "inset-x-0" : "inset-x-1.5")} />}
          </button>
        ))}
      </div>
      <div className="flex items-center pr-[15px] text-[#eceff4]">
        <div className="mr-[52px] flex items-center gap-[11px] pt-1">
          <Icon>
            <circle cx="12" cy="12" r="11" fill="#3f9a2e" />
            <circle cx="12" cy="12" r="9" fill="#e8dc1c" />
            <path d="M12 6v12M6 12h12" stroke="#2c7a22" strokeWidth="2.400" />
          </Icon>
          <Icon className="size-[22px]">
            <rect x="7" y="0" width="10" height="17" rx="1.500" fill="#fff" />
            <path d="M4 12v5c0 3 2 4 4 4h8c2 0 4-1 4-4v-5M12 21v3M7 23.500h10" stroke="#fff" />
          </Icon>
          <Icon>
            <path d="M1 7h7v4c0 4-7 4-7 0zM2.500 7V3M6.500 7V3M4.500 14v5h5" stroke="#fff" />
            <path d="M9 7h13v11H9" stroke="#fff" />
            <path d="M11 9.500h9v6h-9z" fill="#fff" />
            <path d="M23.500 10v5" stroke="#fff" />
          </Icon>
          <Icon className="size-[22px]">
            <path d="M3 22C4 11 11 4 22 4M8 22c1-8 6-12 14-13M13 22c1-5 4-7 9-8" stroke="#c9d0dc" />
            <circle cx="20" cy="20" r="2.500" fill="#fff" />
          </Icon>
          <Icon>
            <path d="M1 8h4l5-5v18l-5-5H1zM14 9c1 2 1 4 0 6M17 6c3 4 3 8 0 12M20 3c4 5 4 13 0 18" stroke="#fff" />
          </Icon>
          <button type="button" className="text-[19px] leading-none">
            英
          </button>
          <Sogou className="ml-1.5 h-[23px] w-6" />
        </div>
        <time className="text-right text-[17px] leading-6">
          19:31 周日
          <br />
          2023/3/12
        </time>
      </div>
    </footer>
  );
}

export default function App() {
  return (
    <div className="relative flex min-h-screen flex-col overflow-hidden bg-[#1b1e21] font-['Open_Sans','Noto_Sans_CJK_SC',sans-serif]">
      <header className="flex h-8 shrink-0 items-center justify-between bg-white pl-[5px] text-[17px] text-[#1c1c1c]">
        <h1 className="whitespace-nowrap">2020 试用版 (剩余 8 天) - [F:\精品课CAD\图纸\基线标注.dwg]</h1>
        <div className="-mr-1 flex items-center gap-12">
          <button type="button" aria-label="最小化" className="h-px w-3.5 bg-black" />
          <button type="button" aria-label="还原">
            <Icon className="size-[14px]">
              <path d="M2 7h16v15H2zM6 7V2h16v15h-4" stroke="#222" strokeWidth="2" />
            </Icon>
          </button>
        </div>
      </header>
      <MenuBar />
      <Toolbars />
      <DocumentRow />
      <Drawing />
      <LayoutTabs />
      <CommandLine />
      <StatusBar />
      <Taskbar />
      <p className="pointer-events-none absolute inset-x-0 bottom-[109px] text-center font-['Noto_Sans_CJK_SC',sans-serif] text-[55px] font-medium leading-[80px] text-white">
        然后我们点击第二点第三点
      </p>
    </div>
  );
}
